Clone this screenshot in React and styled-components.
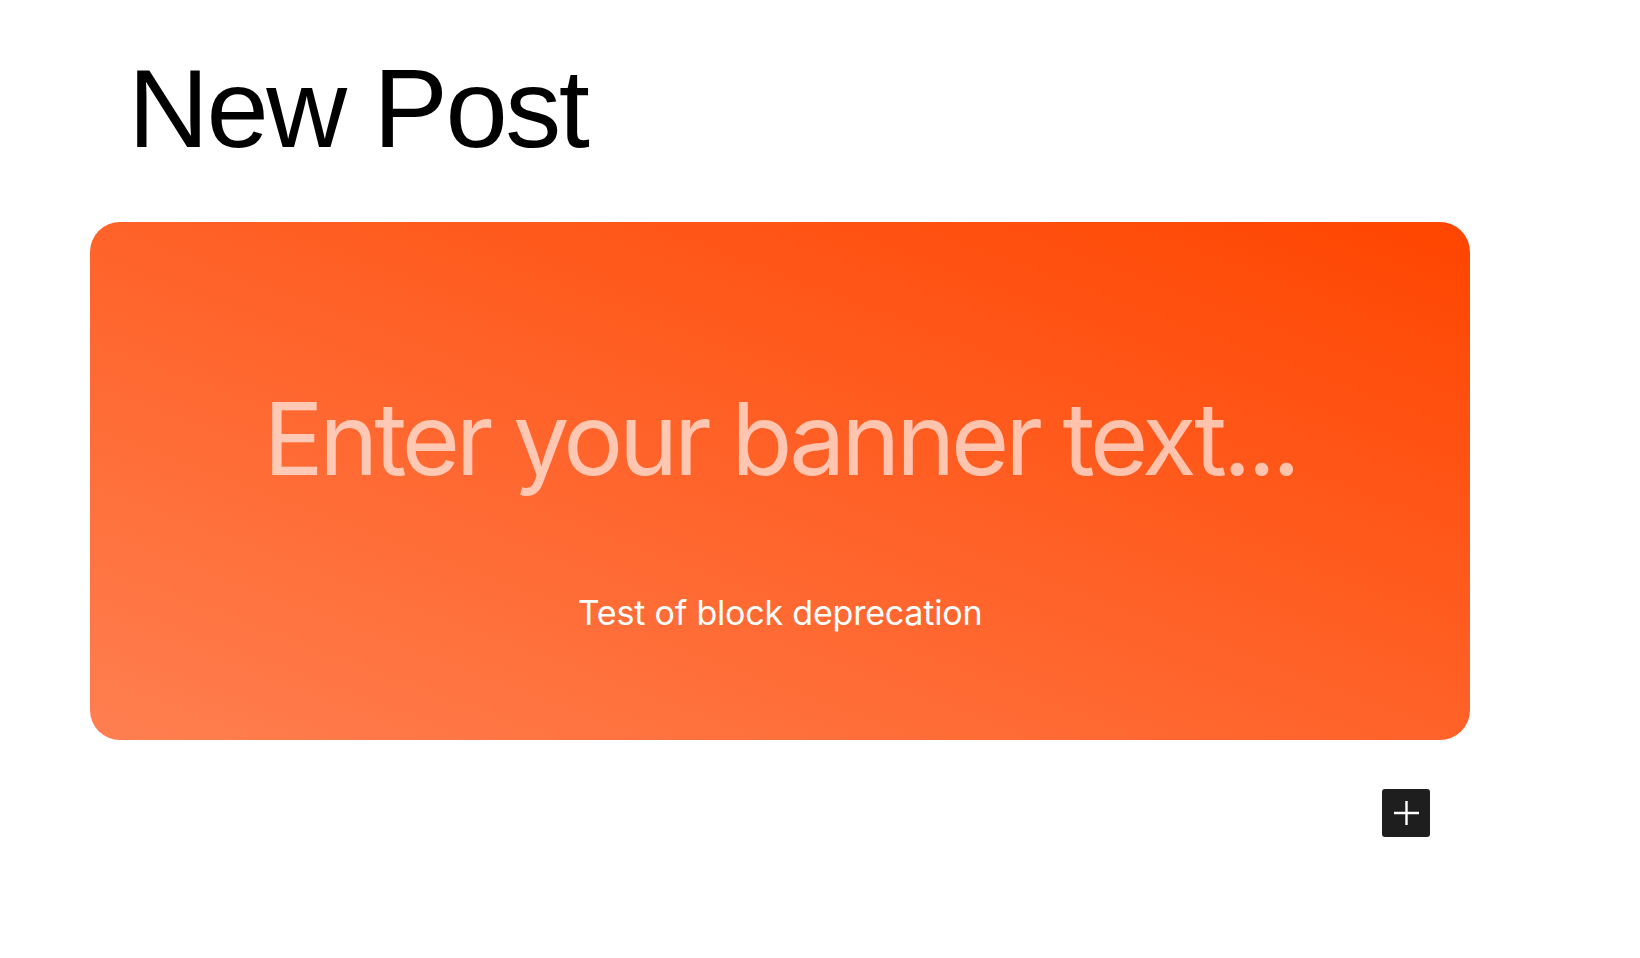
import styled, { createGlobalStyle } from 'styled-components';

const GlobalStyle = createGlobalStyle`
  html, body {
    margin: 0;
    padding: 0;
    background: #fff;
  }
  body {
    font-family: Inter, "Noto Sans", sans-serif;
  }
`;

const Page = styled.div`
  display: flex;
  flex-direction: column;
  padding: 53px 170px 0 90px;
`;

const Title = styled.h1`
  margin: 0 0 57px 0;
  padding-left: 38px;
  font-family: "Liberation Sans", Arial, sans-serif;
  font-weight: 400;
  font-size: 112px;
  line-height: 1;
  letter-spacing: -2.5px;
  color: #000;
`;

const Banner = styled.div`
  height: 518px;
  box-sizing: border-box;
  border-radius: 30px;
  background: linear-gradient(to top right, #ff7f50, #ff4500);
  display: flex;
  flex-direction: column;
  align-items: center;
  padding-top: 167px;
  gap: 107px;
`;

const BannerText = styled.div`
  font-family: Inter, sans-serif;
  font-size: 100px;
  line-height: 1;
  color: rgba(255, 255, 255, 0.64);
  letter-spacing: -4.2px;
`;

const SubText = styled.div`
  font-family: Inter, sans-serif;
  font-size: 34px;
  line-height: 1;
  letter-spacing: -0.2px;
  color: #fff;
`;

const Footer = styled.div`
  display: flex;
  justify-content: flex-end;
  padding: 49px 40px 0 0;
`;

const AddButton = styled.button`
  width: 48px;
  height: 48px;
  padding: 0;
  border: none;
  border-radius: 3px;
  background: #1e1e1e;
  display: flex;
  align-items: center;
  justify-content: center;
  cursor: pointer;
`;

function PlusIcon() {
  return (
    <svg width="48" height="48" viewBox="0 0 48 48">
      <path d="M24.5 12v24M12 24h25" stroke="#fff" strokeWidth="2.4" fill="none" />
    </svg>
  );
}

export default function App() {
  return (
    <>
      <GlobalStyle />
      <Page>
        <Title>New Post</Title>
        <Banner>
          <BannerText>Enter your banner text...</BannerText>
          <SubText>Test of block deprecation</SubText>
        </Banner>
        <Footer>
          <AddButton aria-label="Add block">
            <PlusIcon />
          </AddButton>
        </Footer>
      </Page>
    </>
  );
}
